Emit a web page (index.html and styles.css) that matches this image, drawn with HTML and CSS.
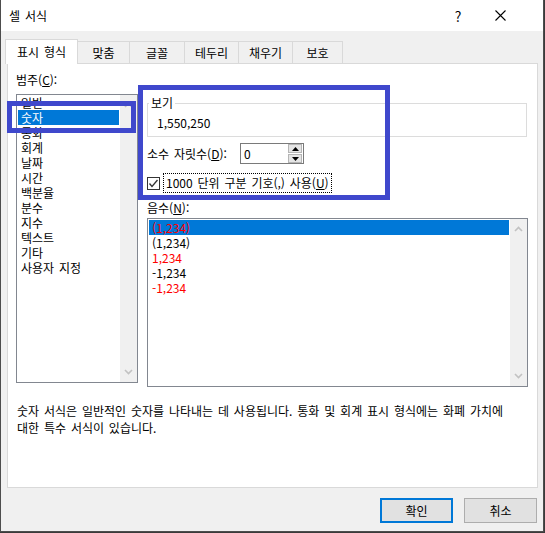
FILE: index.html
```html
<!DOCTYPE html>
<html lang="ko">
<head>
    <meta charset="UTF-8">
    <meta name="viewport" content="width=device-width, initial-scale=1.0">
    <title>셀 서식</title>
    <link rel="stylesheet" href="styles.css">
</head>
<body>
    <div class="window">
        <div class="titlebar">
            <span class="title">셀 서식</span>
            <span class="help">?</span>
            <span class="close">
                <svg width="11" height="11" viewBox="0 0 11 11"><path d="M0.5 0.5L10.5 10.5M10.5 0.5L0.5 10.5" stroke="#000" stroke-width="1.1" fill="none"/></svg>
            </span>
        </div>

        <div class="body">
            <div class="tabs">
                <div class="tab active">표시 형식</div>
                <div class="tab tab-align">맞춤</div>
                <div class="tab tab-font">글꼴</div>
                <div class="tab tab-border">테두리</div>
                <div class="tab tab-fill">채우기</div>
                <div class="tab tab-protect">보호</div>
            </div>

            <div class="page">
                <div class="columns">
                    <div class="category">
                        <div class="label">범주(<u>C</u>):</div>
                        <div class="listbox cat-list">
                            <ul class="items">
                                <li>일반</li>
                                <li class="selected">숫자</li>
                                <li>통화</li>
                                <li>회계</li>
                                <li>날짜</li>
                                <li>시간</li>
                                <li>백분율</li>
                                <li>분수</li>
                                <li>지수</li>
                                <li>텍스트</li>
                                <li>기타</li>
                                <li>사용자 지정</li>
                            </ul>
                            <div class="scrollbar">
                                <svg width="9" height="6" viewBox="0 0 9 6"><polyline points="1,5 4.5,1.5 8,5" stroke="#c2c2c2" stroke-width="1.6" fill="none"/></svg>
                                <svg width="9" height="6" viewBox="0 0 9 6"><polyline points="1,1 4.5,4.5 8,1" stroke="#c2c2c2" stroke-width="1.6" fill="none"/></svg>
                            </div>
                        </div>
                    </div>

                    <div class="options">
                        <fieldset class="sample">
                            <legend>보기</legend>
                            <div class="sample-value">1,550,250</div>
                        </fieldset>

                        <div class="decimals">
                            <label>소수 자릿수(<u>D</u>):</label>
                            <div class="spin">
                                <span class="spin-value">0</span>
                                <div class="spin-buttons">
                                    <span class="spin-btn"><svg width="7" height="4" viewBox="0 0 7 4"><polygon points="0,4 3.5,0 7,4" fill="#000"/></svg></span>
                                    <span class="spin-btn"><svg width="7" height="4" viewBox="0 0 7 4"><polygon points="0,0 3.5,4 7,0" fill="#000"/></svg></span>
                                </div>
                            </div>
                        </div>

                        <div class="check-row">
                            <span class="checkbox">
                                <svg width="11" height="11" viewBox="0 0 11 11"><polyline points="1.5,5.5 4,8.5 9.5,2" stroke="#333" stroke-width="1.3" fill="none"/></svg>
                            </span>
                            <span class="check-label">1000 단위 구분 기호(,) 사용(<u>U</u>)</span>
                        </div>

                        <div class="label neg-label">음수(<u>N</u>):</div>
                        <div class="listbox neg-list">
                            <ul class="items">
                                <li class="selected red">(1,234)</li>
                                <li>(1,234)</li>
                                <li class="red">1,234</li>
                                <li>-1,234</li>
                                <li class="red">-1,234</li>
                            </ul>
                            <div class="scrollbar">
                                <svg width="9" height="6" viewBox="0 0 9 6"><polyline points="1,5 4.5,1.5 8,5" stroke="#c2c2c2" stroke-width="1.6" fill="none"/></svg>
                                <svg width="9" height="6" viewBox="0 0 9 6"><polyline points="1,1 4.5,4.5 8,1" stroke="#c2c2c2" stroke-width="1.6" fill="none"/></svg>
                            </div>
                        </div>
                    </div>
                </div>

                <p class="desc">숫자 서식은 일반적인 숫자를 나타내는 데 사용됩니다. 통화 및 회계 표시 형식에는 화폐 가치에<br>대한 특수 서식이 있습니다.</p>
            </div>

            <div class="actions">
                <button class="primary">확인</button>
                <button>취소</button>
            </div>
        </div>

        <!-- 강조 표시 사각형 -->
        <div class="mark mark-category"></div>
        <div class="mark mark-format"></div>
    </div>
</body>
</html>
```

FILE: styles.css
```css
* {
    box-sizing: border-box;
}

body {
    margin: 0;
    background: #3a3a3a;
    font-family: "Noto Sans CJK KR", "Noto Sans", sans-serif;
    font-size: 12px;
    word-spacing: 1.5px;
    color: #000;
}

.window {
    position: relative;
    width: 544px;
    height: 532px;
    background: #f0f0f0;
    border: 1px solid #4d4d4d;
    border-top: 0;
}

/* 제목 표시줄 */
.titlebar {
    height: 31px;
    background: #fff;
    display: flex;
    align-items: center;
    padding-left: 8px;
}

.title {
    flex: 1;
}

.help {
    width: 20px;
    text-align: center;
    font-size: 14px;
    margin-right: 22px;
}

.close {
    width: 20px;
    display: flex;
    justify-content: center;
    margin-right: 33px;
}

.body {
    padding: 0 5px 0 6px;
}

/* 탭 */
.tabs {
    display: flex;
    align-items: flex-end;
    height: 24px;
    margin-top: 8px;
}

.tab {
    height: 22px;
    line-height: 21px;
    text-align: center;
    background: #f0f0f0;
    border: 1px solid #d9d9d9;
    border-left: 0;
    border-bottom: 0;
}

.tab.active {
    width: 73px;
    height: 25px;
    line-height: 24px;
    margin-left: -2px;
    margin-bottom: -1px;
    background: #fff;
    border-left: 1px solid #d9d9d9;
    position: relative;
    z-index: 1;
}

.tab-align { width: 52px; }
.tab-font { width: 55px; }
.tab-border { width: 54px; }
.tab-fill { width: 54px; }
.tab-protect { width: 50px; }

.page {
    height: 425px;
    background: #fff;
    border: 1px solid #d9d9d9;
    padding: 0 8px;
}

.columns {
    display: flex;
    gap: 9px;
}

.label {
    line-height: 16px;
}

.category {
    width: 122px;
}

.category .label {
    margin-top: 8px;
}

/* 목록 상자 */
.listbox {
    display: flex;
    background: #fff;
    border: 1px solid #828790;
}

.cat-list {
    margin-top: 6px;
    height: 289px;
}

.items {
    list-style: none;
    margin: 0;
    padding: 0 1px;
    flex: 1;
}

.items li {
    height: 15px;
    line-height: 15px;
    padding-left: 3px;
    white-space: nowrap;
}

.items li.selected {
    background: #0078d7;
    color: #fff;
}

.items li.red {
    color: #ff0000;
}

.scrollbar {
    width: 17px;
    background: #f0f0f0;
    display: flex;
    flex-direction: column;
    justify-content: space-between;
    align-items: center;
    padding: 7px 0;
}

.options {
    width: 381px;
}

.sample {
    margin: 32px 0 0;
    padding: 0 0 5px 9px;
    width: 380px;
    min-width: 0;
    border: 1px solid #dcdcdc;
}

.sample legend {
    padding: 0 2px;
    margin-left: -8px;
    line-height: 14px;
}

.sample-value {
    margin-top: 5px;
    line-height: 16px;
}

.decimals {
    display: flex;
    align-items: center;
    height: 21px;
    margin-top: 6px;
}

.decimals label {
    width: 93px;
}

.spin {
    width: 64px;
    height: 21px;
    border: 1px solid #7a7a7a;
    display: flex;
    background: #fff;
}

.spin-value {
    flex: 1;
    line-height: 19px;
    padding-left: 3px;
}

.spin-buttons {
    width: 15px;
    display: flex;
    flex-direction: column;
    gap: 1px;
    padding: 0 1px 0 0;
}

.spin-btn {
    flex: 1;
    display: flex;
    align-items: center;
    justify-content: center;
    background: #e5e5e5;
    border: 1px solid #b5b5b5;
}

.check-row {
    display: flex;
    align-items: center;
    height: 20px;
    margin-top: 9px;
}

.checkbox {
    width: 13px;
    height: 13px;
    border: 1px solid #333;
    margin-right: 3px;
    display: flex;
    align-items: center;
    justify-content: center;
    background: #fff;
}

.check-label {
    line-height: 18px;
    padding: 0 2px;
    border: 1px dotted #000;
}

.neg-label {
    margin-top: 7px;
}

.neg-list {
    margin-top: 2px;
    height: 169px;
}

.neg-list .items {
    padding-top: 1px;
}

.desc {
    margin: 15px 0 0;
    padding-left: 1px;
    line-height: 17px;
}

/* 하단 버튼 */
.actions {
    display: flex;
    justify-content: flex-end;
    gap: 11px;
    margin-top: 10px;
    padding-right: 1px;
}

.actions button {
    width: 73px;
    height: 25px;
    font: inherit;
    color: #000;
    background: #e1e1e1;
    border: 1px solid #adadad;
    padding: 0;
}

.actions button.primary {
    border: 2px solid #0078d7;
}

.mark {
    position: absolute;
    border: 5px solid #3f48cc;
}

.mark-category {
    left: 6px;
    top: 101px;
    width: 129px;
    height: 32px;
}

.mark-format {
    left: 137px;
    top: 85px;
    width: 252px;
    height: 115px;
}
```
